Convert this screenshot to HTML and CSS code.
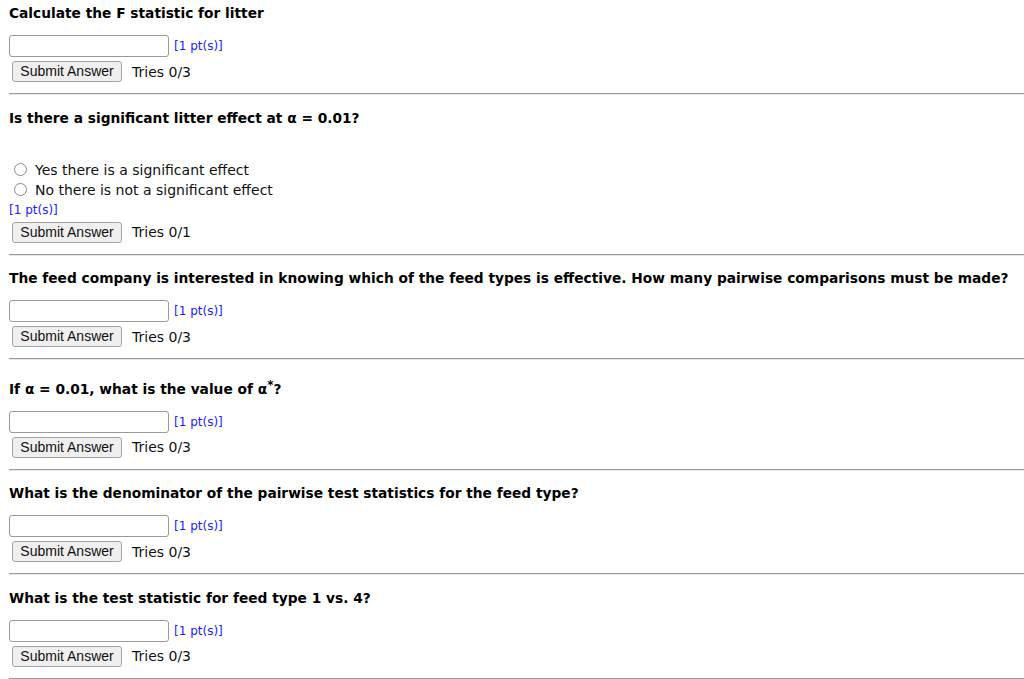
FILE: index.html
```html
<!DOCTYPE html>
<html>
<head>
<meta charset="utf-8">
<link rel="stylesheet" href="styles.css">
</head>
<body>
<div class="page">
  <section class="q">
    <h3 class="q-title">Calculate the F statistic for litter</h3>
    <div class="answer-row"><input class="answer" type="text"><span class="pts">[1 pt(s)]</span></div>
    <div class="submit-row"><button class="submit">Submit Answer</button><span class="tries">Tries 0/3</span></div>
  </section>
  <hr class="sep">
  <section class="q">
    <h3 class="q-title">Is there a significant litter effect at α = 0.01?</h3>
    <div class="choices">
      <label class="choice"><span class="radio"></span>Yes there is a significant effect</label>
      <label class="choice"><span class="radio"></span>No there is not a significant effect</label>
      <div class="pts pts-line">[1 pt(s)]</div>
    </div>
    <div class="submit-row"><button class="submit">Submit Answer</button><span class="tries">Tries 0/1</span></div>
  </section>
  <hr class="sep">
  <section class="q">
    <h3 class="q-title">The feed company is interested in knowing which of the feed types is effective. How many pairwise comparisons must be made?</h3>
    <div class="answer-row"><input class="answer" type="text"><span class="pts">[1 pt(s)]</span></div>
    <div class="submit-row"><button class="submit">Submit Answer</button><span class="tries">Tries 0/3</span></div>
  </section>
  <hr class="sep">
  <section class="q">
    <h3 class="q-title q-title-sup">If α = 0.01, what is the value of α<sup>*</sup>?</h3>
    <div class="answer-row"><input class="answer" type="text"><span class="pts">[1 pt(s)]</span></div>
    <div class="submit-row"><button class="submit">Submit Answer</button><span class="tries">Tries 0/3</span></div>
  </section>
  <hr class="sep">
  <section class="q">
    <h3 class="q-title">What is the denominator of the pairwise test statistics for the feed type?</h3>
    <div class="answer-row"><input class="answer" type="text"><span class="pts">[1 pt(s)]</span></div>
    <div class="submit-row"><button class="submit">Submit Answer</button><span class="tries">Tries 0/3</span></div>
  </section>
  <hr class="sep">
  <section class="q">
    <h3 class="q-title">What is the test statistic for feed type 1 vs. 4?</h3>
    <div class="answer-row"><input class="answer" type="text"><span class="pts">[1 pt(s)]</span></div>
    <div class="submit-row"><button class="submit">Submit Answer</button><span class="tries">Tries 0/3</span></div>
  </section>
  <hr class="sep">
</div>
</body>
</html>
```

FILE: styles.css
```css
html, body {
  margin: 0;
  padding: 0;
  background: #fff;
}
body {
  font-family: "DejaVu Sans", Verdana, sans-serif;
  color: #000;
  overflow: hidden;
}
.page {
  padding: 4px 0 0 9px;
}
.q {
  display: flex;
  flex-direction: column;
}
.q-title {
  margin: 0;
  font-size: 13.75px;
  line-height: 18px;
  font-weight: bold;
  white-space: nowrap;
}
.q-title-sup {
  padding-top: 6px;
}
.q-title sup {
  font-size: 12px;
  line-height: 0;
  vertical-align: 5px;
}
.answer-row {
  display: flex;
  align-items: center;
  margin-top: 13px;
  height: 22px;
}
.answer {
  box-sizing: border-box;
  width: 160px;
  height: 22px;
  margin: 0;
  border: 1px solid #9a9a9a;
  border-radius: 3px;
  background: #fff;
}
.pts {
  font-family: "DejaVu Sans", Verdana, sans-serif;
  font-size: 12px;
  color: #1a1aff;
  margin-left: 5px;
}
.submit-row {
  display: flex;
  align-items: center;
  margin-top: 4px;
}
.submit {
  box-sizing: border-box;
  width: 110px;
  height: 21px;
  margin: 0 0 0 3px;
  padding: 0;
  font-family: "Liberation Sans", Arial, sans-serif;
  font-size: 14px;
  line-height: 17px;
  text-align: center;
  color: #111;
  background: #efefef;
  border: 1px solid #a3a3a3;
  border-radius: 3px;
}
.tries {
  font-size: 14px;
  margin-left: 10px;
  color: #111;
}
.sep {
  margin: 11px 0 13.5px 0;
  height: 0;
  border: 0;
  border-top: 1px solid #999;
  border-bottom: 1px solid #e8e8e8;
}
.choices {
  margin-top: 33px;
  display: flex;
  flex-direction: column;
}
.choice {
  display: flex;
  align-items: center;
  height: 20px;
  font-size: 14px;
  color: #111;
}
.radio {
  box-sizing: border-box;
  width: 13px;
  height: 13px;
  border: 1px solid #8a8a8a;
  border-radius: 50%;
  margin: 0 8px 0 5px;
  background: #fff;
}
.pts-line {
  margin-left: 0;
  height: 20px;
  line-height: 20px;
}
.choices + .submit-row {
  margin-top: 2px;
}
```
